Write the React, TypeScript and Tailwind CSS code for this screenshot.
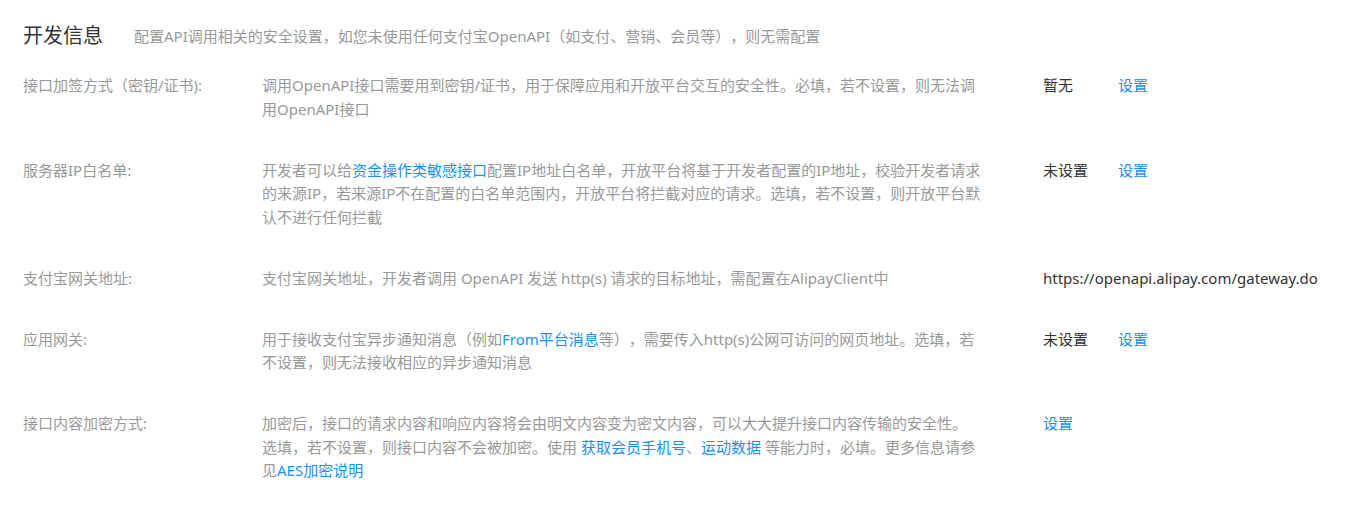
const font = {
  fontFamily: '"Noto Sans", "Noto Sans CJK SC", sans-serif',
};

function Link({ children }: { children: React.ReactNode }) {
  return (
    <a href="#" className="text-[#1890ff] hover:text-[#40a9ff]">
      {children}
    </a>
  );
}

type Row = {
  label: string;
  desc: React.ReactNode;
  status?: string;
  action?: boolean;
  value?: string;
};

const rows: Row[] = [
  {
    label: "接口加签方式（密钥/证书):",
    desc: "调用OpenAPI接口需要用到密钥/证书，用于保障应用和开放平台交互的安全性。必填，若不设置，则无法调用OpenAPI接口",
    status: "暂无",
    action: true,
  },
  {
    label: "服务器IP白名单:",
    desc: (
      <>
        开发者可以给<Link>资金操作类敏感接口</Link>
        配置IP地址白名单，开放平台将基于开发者配置的IP地址，校验开发者请求的来源IP，若来源IP不在配置的白名单范围内，开放平台将拦截对应的请求。选填，若不设置，则开放平台默认不进行任何拦截
      </>
    ),
    status: "未设置",
    action: true,
  },
  {
    label: "支付宝网关地址:",
    desc: "支付宝网关地址，开发者调用 OpenAPI 发送 http(s) 请求的目标地址，需配置在AlipayClient中",
    value: "https://openapi.alipay.com/gateway.do",
  },
  {
    label: "应用网关:",
    desc: (
      <>
        用于接收支付宝异步通知消息（例如<Link>From平台消息</Link>
        等），需要传入http(s)公网可访问的网页地址。选填，若不设置，则无法接收相应的异步通知消息
      </>
    ),
    status: "未设置",
    action: true,
  },
  {
    label: "接口内容加密方式:",
    desc: (
      <>
        加密后，接口的请求内容和响应内容将会由明文内容变为密文内容，可以大大提升接口内容传输的安全性。选填，若不设置，则接口内容不会被加密。使用{" "}
        <Link>获取会员手机号</Link>、<Link>运动数据</Link>{" "}
        等能力时，必填。更多信息请参见<Link>AES加密说明</Link>
      </>
    ),
    action: true,
  },
];

export default function App() {
  return (
    <div
      className="min-h-[518px] bg-white px-[23px] pt-[22px] [text-spacing-trim:space-all]"
      style={font}
    >
      {/* Header */}
      <div className="flex items-center h-[28px]">
        <h2 className="text-[20px] leading-[28px] text-[#333] font-normal">开发信息</h2>
        <span className="ml-[31px] text-[15px] text-[#999]">
          配置API调用相关的安全设置，如您未使用任何支付宝OpenAPI（如支付、营销、会员等），则无需配置
        </span>
      </div>

      {/* Rows */}
      <div className="mt-[24px] flex flex-col gap-[37.5px] text-[15px] leading-[23.5px]">
        {rows.map((r) => (
          <div key={r.label} className="flex items-start">
            <div className="w-[239px] shrink-0 text-[#999]">{r.label}</div>
            <div className="w-[719px] shrink-0 text-[#999]">{r.desc}</div>
            <div className="ml-[62px] flex">
              {r.value ? (
                <span className="text-[#333]">{r.value}</span>
              ) : (
                <>
                  {r.status && <span className="w-[75px] text-[#333]">{r.status}</span>}
                  {r.action && <Link>设置</Link>}
                </>
              )}
            </div>
          </div>
        ))}
      </div>
    </div>
  );
}
